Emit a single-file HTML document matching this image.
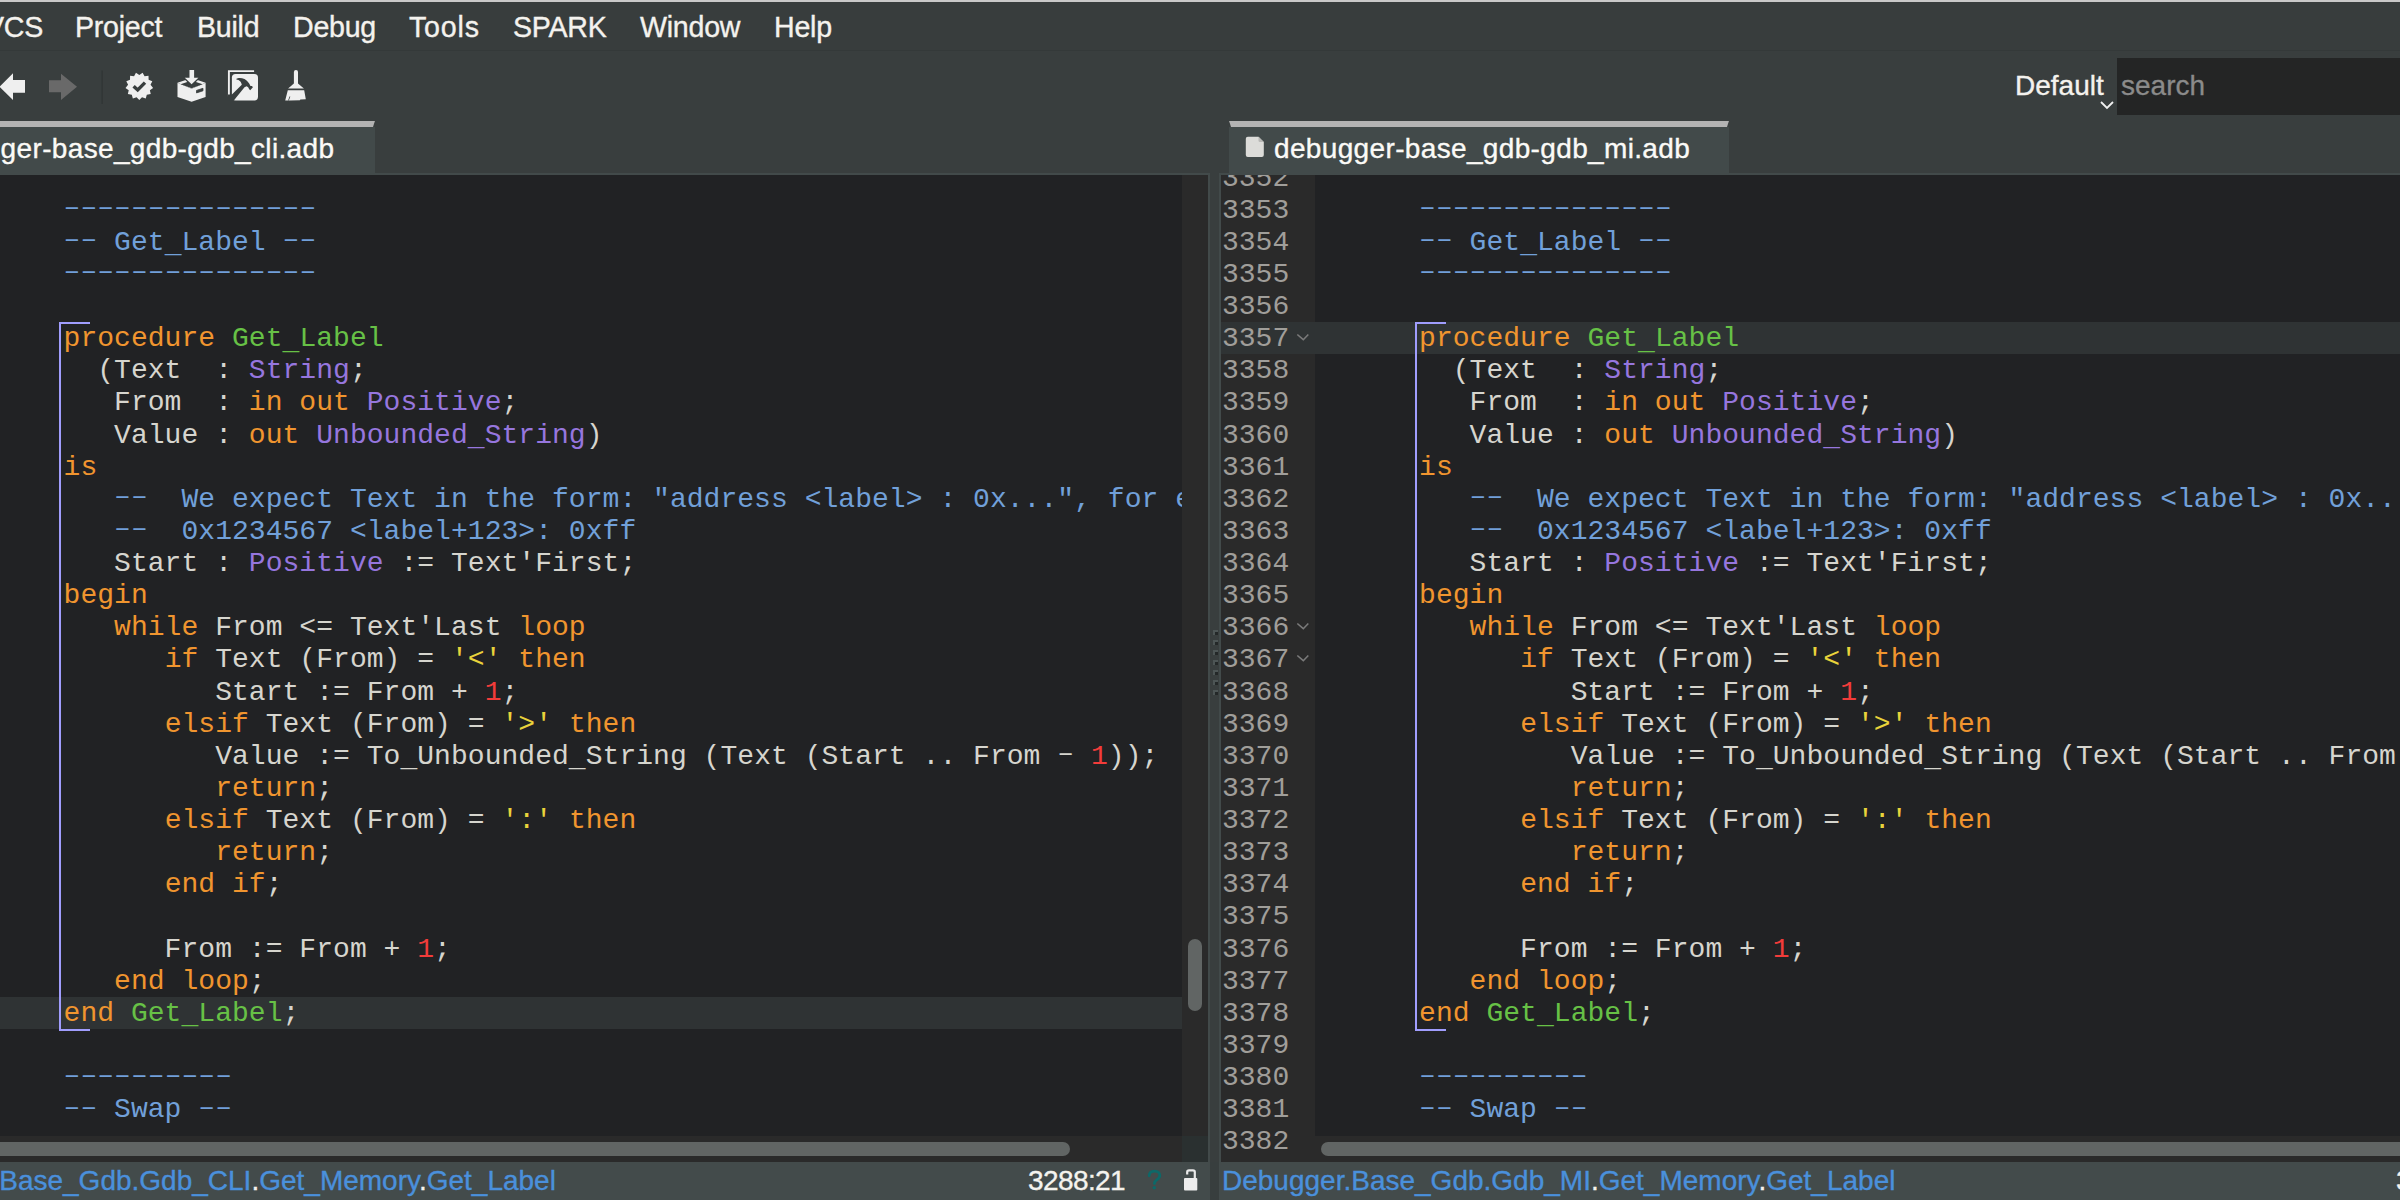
<!DOCTYPE html>
<html><head><meta charset="utf-8">
<style>
*{margin:0;padding:0;box-sizing:border-box}
html,body{width:2400px;height:1200px;overflow:hidden;background:#393e3f;font-family:"Liberation Sans",sans-serif;}
.abs{position:absolute}
#topstrip{left:0;top:0;width:2400px;height:2px;background:#c9c9c9}
#menubar{left:0;top:2px;width:2400px;height:48px;background:#383d3d}
#menubar span{position:absolute;top:6.8px;font-size:28.6px;line-height:36px;letter-spacing:-0.25px;color:#f4f2ee;white-space:nowrap;-webkit-text-stroke:0.35px #f4f2ee}
#sep1{left:0;top:50px;width:2400px;height:2px;background:#343939}
#toolbar{left:0;top:51px;width:2400px;height:67px;background:#393e3e}
#tabbar{left:0;top:118px;width:2400px;height:55px;background:#393e3e}
.tab{position:absolute;top:127px;height:46px;background:#424a4a}
.tabtop{position:absolute;top:120.8px;height:6.2px;background:#b3b3b3}
.tabtxt{position:absolute;top:128.5px;font-size:28px;line-height:40px;color:#fbfaf7;white-space:nowrap;letter-spacing:0.35px;-webkit-text-stroke:0.35px #fbfaf7}
#tabborder{left:0;top:173px;width:2400px;height:2px;background:#424a4a}
.pane{position:absolute;overflow:hidden}
.code{position:absolute;font-family:"Liberation Mono",monospace;font-size:28px;line-height:32.14px;letter-spacing:0.04px;color:#d6d5ce;white-space:pre}
.ln{height:32.14px}
i{font-style:normal}
.d{position:relative;top:-2.5px}
.u{position:relative;top:2.5px}
.k{color:#f0952f}
.t{color:#9676de}
.g{color:#67c146}
.m{color:#71a0d9}
.n{color:#f23c3a}
.c{color:#e9d33b}
.nums{position:absolute;font-family:"Liberation Mono",monospace;font-size:28px;line-height:32.14px;color:#a09e9a;white-space:pre}
#status{left:0;top:1162px;width:2400px;height:38px;background:#434b4b}
.st{position:absolute;top:1162px;font-size:28px;line-height:38px;color:#4a90dc;white-space:nowrap;-webkit-text-stroke:0.35px currentColor}
.st b{font-weight:normal;color:#f5f3ee;-webkit-text-stroke:0.35px #f5f3ee}
</style></head><body>
<div class="abs" id="topstrip"></div>
<div class="abs" id="menubar">
<span style="left:-15px">VCS</span>
<span style="left:75px">Project</span>
<span style="left:197px">Build</span>
<span style="left:293px">Debug</span>
<span style="left:409px;letter-spacing:0.8px">Tools</span>
<span style="left:513px">SPARK</span>
<span style="left:640px">Window</span>
<span style="left:774px">Help</span>
</div>
<div class="abs" id="sep1"></div>
<div class="abs" id="toolbar"></div>
<div class="abs" id="tabbar"></div>
<!-- toolbar icons -->
<svg class="abs" style="left:0;top:51px" width="340" height="67" viewBox="0 51 340 67">
  <polygon fill="#efefef" points="-0.5,86.7 13,73.3 13,80 25,80 25,92.7 13,92.7 13,100"/>
  <polygon fill="#696969" points="49,80.3 61,80.3 61,73.7 77,86.7 61,100 61,92.3 49,92.3"/>
  <rect x="101.5" y="70.5" width="1.2" height="33.5" fill="#2f3434"/>
  <polygon fill="#efefef" points="139.30,100.10 136.60,97.17 132.84,98.51 131.81,94.66 127.86,94.10 128.73,90.21 125.50,87.88 128.08,84.84 126.30,81.27 130.00,79.78 130.08,75.80 134.05,76.19 135.97,72.70 139.30,74.90 142.63,72.70 144.55,76.19 148.52,75.80 148.60,79.78 152.30,81.27 150.52,84.84 153.10,87.88 149.87,90.21 150.74,94.10 146.79,94.66 145.76,98.51 142.00,97.17"/>
  <polyline fill="none" stroke="#393e3e" stroke-width="3.4" points="133.6,86.2 137.7,90 145,82.6"/>
  <!-- box -->
  <polygon fill="#efefef" points="177.5,82.8 191.6,88.8 205.6,82.8 205.6,97 191.6,101.8 177.5,97"/>
  <polygon fill="#efefef" points="177.5,82.8 191.6,78.1 205.6,82.8 191.6,88.8"/>
  <polygon fill="#393e3e" points="180.6,84.3 191.6,80.6 202.6,84.3 191.6,88.3"/>
  <polygon fill="#393e3e" stroke="#393e3e" stroke-width="2.6" stroke-linejoin="round" points="184.8,77.8 198.4,77.8 191.6,84.2"/>
  <rect x="189.5" y="70" width="4.6" height="8.5" fill="#efefef"/>
  <polygon fill="#efefef" points="184.8,77.8 198.4,77.8 191.6,84.2"/>
  <polygon fill="#393e3e" stroke="#393e3e" stroke-width="0.8" stroke-linejoin="round" points="196.5,90.4 203,88.3 203,90.8 196.5,92.9"/>
  <!-- hammer -->
  <path fill="none" stroke="#efefef" stroke-width="1.9" d="M228.9,96.5 V71.1 H254.1"/>
  <rect x="231.9" y="74" width="26.1" height="26.4" rx="3.6" fill="#efefef"/>
  <path fill="#393e3e" d="M236.4,78.8 C238,77.6 241.5,77.5 244.5,79.1 C247,80.4 248.8,82.5 250.5,86 L252,86 L252.9,87.2 L250.2,90.2 L249,89 C248.6,87.8 247.8,86.6 246.6,86.3 L244.5,87.2 L233.8,100.6 L228,100.6 L228,94.4 L231.9,94.4 L241.8,84.8 C241.5,83 240.5,81 238.5,80 C237.5,79.6 236.8,79.5 236.4,79.4 Z"/>
  <!-- broom -->
  <rect x="293.9" y="70" width="4.1" height="16" rx="2" fill="#efefef"/>
  <polygon fill="#efefef" points="293.9,83.5 298,83.5 303.9,88.4 288.1,88.4"/>
  <polygon fill="#efefef" points="287.8,90.3 304.2,90.3 305.8,99.3 300.3,99.6 300,100.3 290,100.5 285.2,100.4"/>
  <polygon fill="#393e3e" points="289.5,96.5 290.3,96.5 288.8,100.5 288.1,100.5"/>
</svg>
<!-- Default + search -->
<div class="abs" style="left:2015px;top:68px;font-size:28px;line-height:36px;color:#f4f2ee;white-space:nowrap;-webkit-text-stroke:0.35px #f4f2ee">Default</div>
<svg class="abs" style="left:2098px;top:99px" width="18" height="14"><polyline fill="none" stroke="#f0f0f0" stroke-width="1.8" points="3,3 9,9 15,3"/></svg>
<div class="abs" style="left:2117px;top:58px;width:283px;height:57px;background:#242525"></div>
<div class="abs" style="left:2121px;top:68px;font-size:28px;line-height:36px;color:#8b8b8b;white-space:nowrap;-webkit-text-stroke:0.3px #8b8b8b">search</div>


<!-- left tab -->
<div class="tab" style="left:0;width:375px"></div>
<div class="tabtop" style="left:0;width:375px;clip-path:polygon(0 0,100% 0,calc(100% - 2px) 100%,0 100%)"></div>
<div class="tabtxt" style="left:-79px">debugger-base_gdb-gdb_cli.adb</div>
<!-- right tab -->
<div class="tab" style="left:1229px;width:500px"></div>
<div class="tabtop" style="left:1229px;width:500px;clip-path:polygon(0 0,100% 0,calc(100% - 2px) 100%,2px 100%)"></div>
<svg class="abs" style="left:1244px;top:135px" width="22" height="24" viewBox="1244 135 22 24"><path fill="#dcdcd9" d="M1247.5,136.7 H1258.5 L1263.8,142 V155 Q1263.8,157 1261.8,157 H1247.8 Q1245.8,157 1245.8,155 V138.7 Q1245.8,136.7 1247.8,136.7 Z"/><path fill="#b8b8b5" d="M1258.5,136.7 L1263.8,142 H1260 Q1258.5,142 1258.5,140.5 Z"/></svg><div class="tabtxt" style="left:1274px">debugger-base_gdb-gdb_mi.adb</div>
<div class="abs" id="tabborder"></div>

<!-- left pane -->
<div class="pane" style="left:0;top:175px;width:1210px;height:987px;background:#424a4a">
  <div class="abs" style="left:0;top:0;width:1208px;height:987px;background:#2a2a2a"></div>
  <div class="abs" style="left:0;top:0;width:1182px;height:961px;background:#212224;overflow:hidden">
    <div class="abs" style="left:0;top:822px;width:1182px;height:32px;background:#2f3334"></div>
    <div class="abs" style="left:59px;top:147px;width:2px;height:709px;background:#a09dfd"></div>
    <div class="abs" style="left:59px;top:147px;width:31px;height:2px;background:#a09dfd"></div>
    <div class="abs" style="left:59px;top:854px;width:31px;height:2px;background:#a09dfd"></div>
    <div class="code" style="left:-37.5px;top:-12.4px"><div class="ln">&nbsp;</div><div class="ln">      <i class="m"><i class="d">–</i><i class="d">–</i><i class="d">–</i><i class="d">–</i><i class="d">–</i><i class="d">–</i><i class="d">–</i><i class="d">–</i><i class="d">–</i><i class="d">–</i><i class="d">–</i><i class="d">–</i><i class="d">–</i><i class="d">–</i><i class="d">–</i></i></div><div class="ln">      <i class="m"><i class="d">–</i><i class="d">–</i> Get<i class="u">_</i>Label <i class="d">–</i><i class="d">–</i></i></div><div class="ln">      <i class="m"><i class="d">–</i><i class="d">–</i><i class="d">–</i><i class="d">–</i><i class="d">–</i><i class="d">–</i><i class="d">–</i><i class="d">–</i><i class="d">–</i><i class="d">–</i><i class="d">–</i><i class="d">–</i><i class="d">–</i><i class="d">–</i><i class="d">–</i></i></div><div class="ln">&nbsp;</div><div class="ln">      <i class="k">procedure</i> <i class="g">Get<i class="u">_</i>Label</i></div><div class="ln">        (Text  : <i class="t">String</i>;</div><div class="ln">         From  : <i class="k">in</i> <i class="k">out</i> <i class="t">Positive</i>;</div><div class="ln">         Value : <i class="k">out</i> <i class="t">Unbounded<i class="u">_</i>String</i>)</div><div class="ln">      <i class="k">is</i></div><div class="ln">         <i class="m"><i class="d">–</i><i class="d">–</i>  We expect Text in the form: &quot;address &lt;label&gt; : 0x...&quot;, for example:</i></div><div class="ln">         <i class="m"><i class="d">–</i><i class="d">–</i>  0x1234567 &lt;label+123&gt;: 0xff</i></div><div class="ln">         Start : <i class="t">Positive</i> := Text&#x27;First;</div><div class="ln">      <i class="k">begin</i></div><div class="ln">         <i class="k">while</i> From &lt;= Text&#x27;Last <i class="k">loop</i></div><div class="ln">            <i class="k">if</i> Text (From) = <i class="c">&#x27;&lt;&#x27;</i> <i class="k">then</i></div><div class="ln">               Start := From + <i class="n">1</i>;</div><div class="ln">            <i class="k">elsif</i> Text (From) = <i class="c">&#x27;&gt;&#x27;</i> <i class="k">then</i></div><div class="ln">               Value := To<i class="u">_</i>Unbounded<i class="u">_</i>String (Text (Start .. From <i class="d">–</i> <i class="n">1</i>));</div><div class="ln">               <i class="k">return</i>;</div><div class="ln">            <i class="k">elsif</i> Text (From) = <i class="c">&#x27;:&#x27;</i> <i class="k">then</i></div><div class="ln">               <i class="k">return</i>;</div><div class="ln">            <i class="k">end</i> <i class="k">if</i>;</div><div class="ln">&nbsp;</div><div class="ln">            From := From + <i class="n">1</i>;</div><div class="ln">         <i class="k">end</i> <i class="k">loop</i>;</div><div class="ln">      <i class="k">end</i> <i class="g">Get<i class="u">_</i>Label</i>;</div><div class="ln">&nbsp;</div><div class="ln">      <i class="m"><i class="d">–</i><i class="d">–</i><i class="d">–</i><i class="d">–</i><i class="d">–</i><i class="d">–</i><i class="d">–</i><i class="d">–</i><i class="d">–</i><i class="d">–</i></i></div><div class="ln">      <i class="m"><i class="d">–</i><i class="d">–</i> Swap <i class="d">–</i><i class="d">–</i></i></div><div class="ln">&nbsp;</div></div>
  </div>
  <!-- v scrollbar thumb -->
  <div class="abs" style="left:1188px;top:764px;width:14px;height:72px;border-radius:7px;background:#616564"></div>
  <!-- h scrollbar thumb -->
  <div class="abs" style="left:-20px;top:967px;width:1090px;height:14px;border-radius:7px;background:#616564"></div>
  <div class="abs" style="left:1182px;top:961px;width:26px;height:26px;background:#2a3030"></div>
</div>
<!-- splitter -->
<div class="abs" style="left:1210px;top:173px;width:9px;height:1027px;background:#393e3e"></div>

<div class="abs" style="left:1213px;top:630px;width:5px;height:5px;background:#4d5555"></div><div class="abs" style="left:1214.5px;top:631.5px;width:3.5px;height:3.5px;background:#242828"></div><div class="abs" style="left:1213px;top:640px;width:5px;height:5px;background:#4d5555"></div><div class="abs" style="left:1214.5px;top:641.5px;width:3.5px;height:3.5px;background:#242828"></div><div class="abs" style="left:1213px;top:650px;width:5px;height:5px;background:#4d5555"></div><div class="abs" style="left:1214.5px;top:651.5px;width:3.5px;height:3.5px;background:#242828"></div><div class="abs" style="left:1213px;top:660px;width:5px;height:5px;background:#4d5555"></div><div class="abs" style="left:1214.5px;top:661.5px;width:3.5px;height:3.5px;background:#242828"></div><div class="abs" style="left:1213px;top:670px;width:5px;height:5px;background:#4d5555"></div><div class="abs" style="left:1214.5px;top:671.5px;width:3.5px;height:3.5px;background:#242828"></div><div class="abs" style="left:1213px;top:680px;width:5px;height:5px;background:#4d5555"></div><div class="abs" style="left:1214.5px;top:681.5px;width:3.5px;height:3.5px;background:#242828"></div><div class="abs" style="left:1213px;top:690px;width:5px;height:5px;background:#4d5555"></div><div class="abs" style="left:1214.5px;top:691.5px;width:3.5px;height:3.5px;background:#242828"></div>
<!-- right pane -->
<div class="pane" style="left:1219px;top:175px;width:1181px;height:987px;background:#424a4a">
  <div class="abs" style="left:2px;top:0;width:94px;height:987px;background:#2a2a2a"></div>
  <div class="abs" style="left:96px;top:0;width:1085px;height:987px;background:#2a2a2a"></div>
  <div class="abs" style="left:96px;top:0;width:1085px;height:961px;background:#212224"></div>
  <div class="abs" style="left:2px;top:147px;width:1179px;height:32px;background:#2f3334"></div>
  <div class="abs" style="left:196px;top:147px;width:2px;height:709px;background:#a09dfd"></div>
  <div class="abs" style="left:196px;top:147px;width:31px;height:2px;background:#a09dfd"></div>
  <div class="abs" style="left:196px;top:854px;width:31px;height:2px;background:#a09dfd"></div>
  <svg class="abs" style="left:76px;top:158.0px" width="16" height="10"><polyline fill="none" stroke="#7a7a7a" stroke-width="1.6" points="2.3,1.5 8.3,6.7 13.3,1.5"/></svg><svg class="abs" style="left:76px;top:447.3px" width="16" height="10"><polyline fill="none" stroke="#7a7a7a" stroke-width="1.6" points="2.3,1.5 8.3,6.7 13.3,1.5"/></svg><svg class="abs" style="left:76px;top:479.4px" width="16" height="10"><polyline fill="none" stroke="#7a7a7a" stroke-width="1.6" points="2.3,1.5 8.3,6.7 13.3,1.5"/></svg><div class="nums" style="left:3px;top:-12.4px"><div class="ln">3352</div><div class="ln">3353</div><div class="ln">3354</div><div class="ln">3355</div><div class="ln">3356</div><div class="ln">3357</div><div class="ln">3358</div><div class="ln">3359</div><div class="ln">3360</div><div class="ln">3361</div><div class="ln">3362</div><div class="ln">3363</div><div class="ln">3364</div><div class="ln">3365</div><div class="ln">3366</div><div class="ln">3367</div><div class="ln">3368</div><div class="ln">3369</div><div class="ln">3370</div><div class="ln">3371</div><div class="ln">3372</div><div class="ln">3373</div><div class="ln">3374</div><div class="ln">3375</div><div class="ln">3376</div><div class="ln">3377</div><div class="ln">3378</div><div class="ln">3379</div><div class="ln">3380</div><div class="ln">3381</div><div class="ln">3382</div></div>
  <div class="abs" style="left:96px;top:0;width:1085px;height:961px;overflow:hidden">
    <div class="code" style="left:3px;top:-12.4px"><div class="ln">&nbsp;</div><div class="ln">      <i class="m"><i class="d">–</i><i class="d">–</i><i class="d">–</i><i class="d">–</i><i class="d">–</i><i class="d">–</i><i class="d">–</i><i class="d">–</i><i class="d">–</i><i class="d">–</i><i class="d">–</i><i class="d">–</i><i class="d">–</i><i class="d">–</i><i class="d">–</i></i></div><div class="ln">      <i class="m"><i class="d">–</i><i class="d">–</i> Get<i class="u">_</i>Label <i class="d">–</i><i class="d">–</i></i></div><div class="ln">      <i class="m"><i class="d">–</i><i class="d">–</i><i class="d">–</i><i class="d">–</i><i class="d">–</i><i class="d">–</i><i class="d">–</i><i class="d">–</i><i class="d">–</i><i class="d">–</i><i class="d">–</i><i class="d">–</i><i class="d">–</i><i class="d">–</i><i class="d">–</i></i></div><div class="ln">&nbsp;</div><div class="ln">      <i class="k">procedure</i> <i class="g">Get<i class="u">_</i>Label</i></div><div class="ln">        (Text  : <i class="t">String</i>;</div><div class="ln">         From  : <i class="k">in</i> <i class="k">out</i> <i class="t">Positive</i>;</div><div class="ln">         Value : <i class="k">out</i> <i class="t">Unbounded<i class="u">_</i>String</i>)</div><div class="ln">      <i class="k">is</i></div><div class="ln">         <i class="m"><i class="d">–</i><i class="d">–</i>  We expect Text in the form: &quot;address &lt;label&gt; : 0x...&quot;, for example:</i></div><div class="ln">         <i class="m"><i class="d">–</i><i class="d">–</i>  0x1234567 &lt;label+123&gt;: 0xff</i></div><div class="ln">         Start : <i class="t">Positive</i> := Text&#x27;First;</div><div class="ln">      <i class="k">begin</i></div><div class="ln">         <i class="k">while</i> From &lt;= Text&#x27;Last <i class="k">loop</i></div><div class="ln">            <i class="k">if</i> Text (From) = <i class="c">&#x27;&lt;&#x27;</i> <i class="k">then</i></div><div class="ln">               Start := From + <i class="n">1</i>;</div><div class="ln">            <i class="k">elsif</i> Text (From) = <i class="c">&#x27;&gt;&#x27;</i> <i class="k">then</i></div><div class="ln">               Value := To<i class="u">_</i>Unbounded<i class="u">_</i>String (Text (Start .. From <i class="d">–</i> <i class="n">1</i>));</div><div class="ln">               <i class="k">return</i>;</div><div class="ln">            <i class="k">elsif</i> Text (From) = <i class="c">&#x27;:&#x27;</i> <i class="k">then</i></div><div class="ln">               <i class="k">return</i>;</div><div class="ln">            <i class="k">end</i> <i class="k">if</i>;</div><div class="ln">&nbsp;</div><div class="ln">            From := From + <i class="n">1</i>;</div><div class="ln">         <i class="k">end</i> <i class="k">loop</i>;</div><div class="ln">      <i class="k">end</i> <i class="g">Get<i class="u">_</i>Label</i>;</div><div class="ln">&nbsp;</div><div class="ln">      <i class="m"><i class="d">–</i><i class="d">–</i><i class="d">–</i><i class="d">–</i><i class="d">–</i><i class="d">–</i><i class="d">–</i><i class="d">–</i><i class="d">–</i><i class="d">–</i></i></div><div class="ln">      <i class="m"><i class="d">–</i><i class="d">–</i> Swap <i class="d">–</i><i class="d">–</i></i></div><div class="ln">&nbsp;</div></div>
  </div>
  <div class="abs" style="left:102px;top:967px;width:1200px;height:14px;border-radius:7px;background:#616564"></div>
</div>

<!-- status bars -->
<div class="abs" id="status"></div>
<div class="abs" style="left:1210px;top:1162px;width:9px;height:38px;background:#383e3e"></div>
<div class="st" style="left:-130px">Debugger.Base_Gdb.Gdb_CLI<b>.</b>Get_Memory<b>.</b>Get_Label</div>
<div class="st" style="left:1028px;color:#f5f3ee;letter-spacing:-0.6px">3288:21</div>
<svg class="abs" style="left:1140px;top:1164px" width="28" height="32" viewBox="1140 1164 28 32"><path fill="none" stroke="#0d6868" stroke-width="2.8" stroke-linecap="round" d="M1149.2,1175.8 C1149.2,1172.4 1151.8,1171.1 1154.6,1171.1 C1157.6,1171.1 1159.8,1172.9 1159.8,1175.6 C1159.8,1178.3 1157.6,1179.3 1155.9,1180.6 C1154.8,1181.5 1154.4,1182.3 1154.4,1183.6"/><circle cx="1154.3" cy="1187.7" r="1.75" fill="#0d6868"/></svg>
<svg class="abs" style="left:1180px;top:1165px" width="22" height="30" viewBox="1180 1165 22 30"><path fill="none" stroke="#e9e9e9" stroke-width="2.2" d="M1187.2,1174.5 V1172 Q1187.2,1170.3 1189,1170.3 H1193 Q1194.8,1170.3 1194.8,1172 V1179"/><rect x="1184" y="1178" width="13.3" height="12.6" rx="1" fill="#ececec"/></svg>
<div class="st" style="left:1222px">Debugger.Base_Gdb.Gdb_MI<b>.</b>Get_Memory<b>.</b>Get_Label</div>
<div class="st" style="left:2396px;color:#f5f3ee">3357:1</div>
</body></html>
